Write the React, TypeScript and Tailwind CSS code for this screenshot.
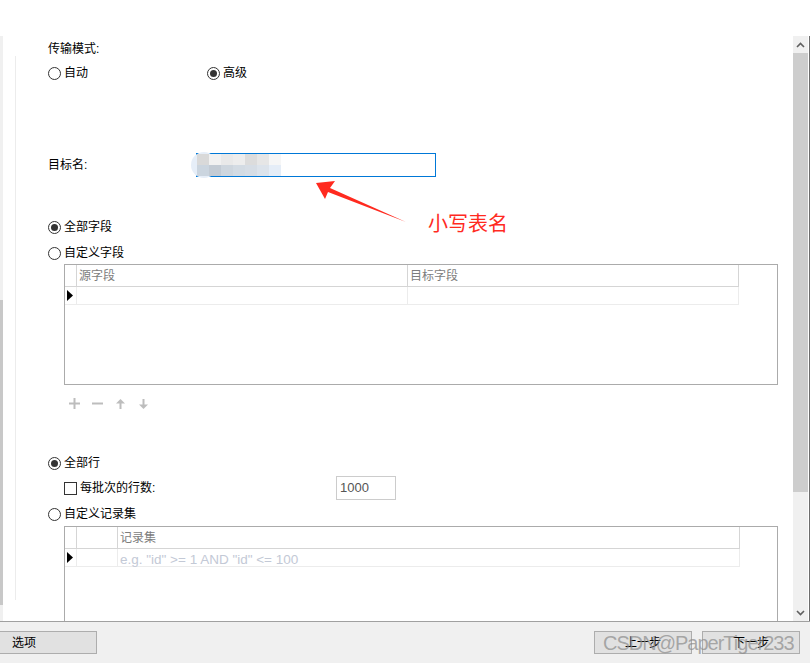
import React from "react";

function Radio({ checked = false, label }: { checked?: boolean; label: string }) {
  return (
    <div className="flex items-center h-4">
      <div className="w-[13px] h-[13px] rounded-full border border-[#333333] bg-white flex items-center justify-center">
        {checked && <div className="w-[7px] h-[7px] rounded-full bg-[#333333]"></div>}
      </div>
      <span className="ml-[3px] text-xs text-black">{label}</span>
    </div>
  );
}

function RowMarker() {
  return (
    <svg width="7" height="11" viewBox="0 0 7 11" className="ml-[2px]">
      <polygon points="0,0 6,5.5 0,11" fill="#000" />
    </svg>
  );
}

function Chevron({ down = false }: { down?: boolean }) {
  return (
    <svg width="9" height="6" viewBox="0 0 9 6">
      <polyline
        points={down ? "1,1 4.5,4.5 8,1" : "1,5 4.5,1.5 8,5"}
        fill="none"
        stroke="#606060"
        strokeWidth="1.6"
      />
    </svg>
  );
}

const blocksTop = ["#d9d9d9", "#f1f1f1", "#e9e9e9", "#ededed", "#dcdcdc", "#e6e6e6", "#f6f6f6"];
const blocksBottom = ["#cbd5df", "#c3cbd4", "#ced6de", "#d3dbe3", "#d6dde5", "#dce3eb", "#e5edf7"];

export default function App() {
  return (
    <div className="relative w-[810px] h-[663px] overflow-hidden bg-white flex flex-col font-['Liberation_Sans','Noto_Sans_CJK_SC',sans-serif]">
      {/* top blank */}
      <div className="h-[36px] shrink-0"></div>

      {/* main panel */}
      <div className="flex h-[585px] shrink-0">
        <div className="w-[3px] flex flex-col bg-[#f0f0f0]">
          <div className="h-[264px]"></div>
          <div className="h-[305px] bg-[#c8c8c8]"></div>
        </div>
        <div className="w-[12px]"></div>
        <div className="w-px flex flex-col">
          <div className="h-[20px]"></div>
          <div className="h-[544px] bg-[#ececec]"></div>
        </div>

        {/* content */}
        <div className="flex-1 overflow-hidden pl-[32px] pt-[5px] flex flex-col">
          <div className="h-4 flex items-center text-xs text-black">传输模式:</div>
          <div className="mt-[8px] flex">
            <div className="w-[159px]">
              <Radio label="自动" />
            </div>
            <Radio checked label="高级" />
          </div>

          <div className="mt-[72px] h-[24px] flex items-center">
            <div className="w-[148px] text-xs text-black">目标名:</div>
            <div className="relative w-[240px] h-[24px] border border-[#0078d7] bg-white">
              <div className="absolute left-[-6px] top-[-2px] w-[26px] h-[26px] rounded-full bg-[#e6eef8]"></div>
              <div className="absolute left-0 top-0 flex flex-col">
                <div className="flex">
                  {blocksTop.map((c, i) => (
                    <div key={i} className="w-[12px] h-[11px]" style={{ backgroundColor: c }}></div>
                  ))}
                </div>
                <div className="flex">
                  {blocksBottom.map((c, i) => (
                    <div key={i} className="w-[12px] h-[11px]" style={{ backgroundColor: c }}></div>
                  ))}
                </div>
              </div>
            </div>
          </div>

          <div className="mt-[42px]">
            <Radio checked label="全部字段" />
          </div>
          <div className="mt-[10px]">
            <Radio label="自定义字段" />
          </div>

          {/* field table */}
          <div className="mt-[3px] ml-[16px] w-[714px] h-[121px] border border-[#ababab] bg-white shrink-0">
            <div className="flex h-[22px] w-[674px] border-b border-[#d5d5d5]">
              <div className="w-[12px] border-r border-[#d5d5d5]"></div>
              <div className="w-[331px] border-r border-[#d5d5d5] pl-[2px] text-xs text-[#7d7d7d] flex items-center">源字段</div>
              <div className="w-[331px] border-r border-[#d5d5d5] pl-[2px] text-xs text-[#7d7d7d] flex items-center">目标字段</div>
            </div>
            <div className="flex h-[18px] w-[674px] border-b border-[#ececec]">
              <div className="w-[12px] border-r border-[#ececec] flex items-center">
                <RowMarker />
              </div>
              <div className="w-[331px] border-r border-[#ececec]"></div>
              <div className="w-[331px] border-r border-[#ececec]"></div>
            </div>
          </div>

          {/* toolbar */}
          <div className="mt-[13px] ml-[21px] h-4 flex items-center gap-[12px]">
            <svg width="11" height="11" viewBox="0 0 11 11">
              <path d="M5.5 0v11M0 5.5h11" stroke="#bdbdbd" strokeWidth="2" />
            </svg>
            <svg width="11" height="11" viewBox="0 0 11 11">
              <path d="M0 5.5h11" stroke="#bdbdbd" strokeWidth="2" />
            </svg>
            <svg width="9" height="10" viewBox="0 0 9 10" className="ml-[1px]">
              <polygon points="4.5,0 9,4.5 0,4.5" fill="#bdbdbd" />
              <rect x="3.5" y="4" width="2" height="6" fill="#bdbdbd" />
            </svg>
            <svg width="9" height="10" viewBox="0 0 9 10" className="ml-[2px]">
              <rect x="3.5" y="0" width="2" height="6" fill="#bdbdbd" />
              <polygon points="0,5.5 9,5.5 4.5,10" fill="#bdbdbd" />
            </svg>
          </div>

          <div className="mt-[46px]">
            <Radio checked label="全部行" />
          </div>
          <div className="mt-[5px] h-[24px] ml-[16px] flex items-center">
            <div className="w-[13px] h-[13px] border border-[#333333] bg-white"></div>
            <span className="ml-[3px] w-[256px] text-xs text-black">每批次的行数:</span>
            <div className="w-[60px] h-[24px] border border-[#cccccc] bg-white text-[13px] text-[#555555] flex items-center pl-[3px]">1000</div>
          </div>
          <div className="mt-[6px]">
            <Radio label="自定义记录集" />
          </div>

          {/* record table */}
          <div className="mt-[4px] ml-[16px] w-[714px] h-[120px] border border-[#ababab] bg-white shrink-0">
            <div className="flex h-[22px] w-[675px] border-b border-[#d5d5d5]">
              <div className="w-[12px] border-r border-[#d5d5d5]"></div>
              <div className="w-[41px] border-r border-[#d5d5d5]"></div>
              <div className="w-[622px] border-r border-[#d5d5d5] pl-[2px] text-xs text-[#7d7d7d] flex items-center">记录集</div>
            </div>
            <div className="flex h-[18px] w-[675px] border-b border-[#ececec]">
              <div className="w-[12px] border-r border-[#ececec] flex items-center">
                <RowMarker />
              </div>
              <div className="w-[41px] border-r border-[#ececec]"></div>
              <div className="w-[622px] border-r border-[#ececec] pl-[2px] pt-[3px] text-[13.5px] leading-[15px] text-[#c3c9d6] flex items-center">
                e.g. "id" &gt;= 1 AND "id" &lt;= 100
              </div>
            </div>
          </div>
        </div>

        {/* scrollbar */}
        <div className="w-[15px] flex flex-col bg-[#f0f0f0]">
          <div className="h-[17px] flex items-center justify-center">
            <Chevron />
          </div>
          <div className="h-[439px] bg-[#cdcdcd]"></div>
          <div className="flex-1"></div>
          <div className="h-[17px] flex items-center justify-center">
            <Chevron down />
          </div>
        </div>
        <div className="w-[2px] border-r border-[#6d6d6d]"></div>
      </div>

      {/* bottom bar */}
      <div className="flex-1 border-t border-[#a0a0a0] bg-[#f0f0f0] flex items-start pt-[9px]">
        <div className="-ml-px w-[98px] h-[23px] bg-[#e1e1e1] border border-[#adadad] text-xs text-black flex items-center pl-[12px]">
          选项
        </div>
        <div className="flex-1"></div>
        <div className="w-[98px] h-[23px] bg-[#e1e1e1] border border-[#adadad] text-xs text-black flex items-center justify-center">
          上一步
        </div>
        <div className="ml-[10px] mr-[10px] w-[98px] h-[23px] bg-[#e1e1e1] border border-[#adadad] text-xs text-black flex items-center justify-center">
          下一步
        </div>
      </div>

      {/* annotation overlay */}
      <svg className="absolute left-0 top-0 pointer-events-none" width="810" height="663" viewBox="0 0 810 663">
        <polygon points="316,183 335,181 330,188 406,222 328,192 325,199" fill="#ff2a1f" />
      </svg>
      <div className="absolute left-[428px] top-[210px] text-[20px] leading-[28px] text-[#ff2a1f]">小写表名</div>

      {/* watermark */}
      <div className="absolute left-[603px] top-[629px] text-[20px] leading-[28px] tracking-[-1px] text-[#8a8a8a]/70 pointer-events-none">
        CSDN@PaperTiger233
      </div>
    </div>
  );
}
